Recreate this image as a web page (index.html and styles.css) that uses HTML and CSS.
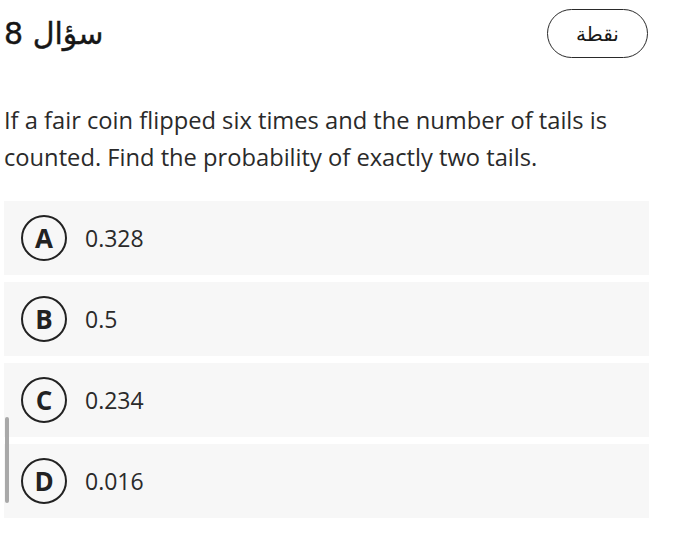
FILE: index.html
```html
<!DOCTYPE html>
<html lang="ar">
<head>
<meta charset="utf-8">
<link rel="stylesheet" href="styles.css">
</head>
<body>
<div class="page">
  <header class="head">
    <h1 class="title" dir="rtl">سؤال 8</h1>
    <button class="pill" dir="rtl">نقطة</button>
  </header>
  <p class="question" lang="en" dir="ltr">If a fair coin flipped six times and the number of tails is counted. Find the probability of exactly two tails.</p>
  <ul class="options" lang="en" dir="ltr">
    <li class="option"><span class="letter">A</span><span class="value">0.328</span></li>
    <li class="option"><span class="letter">B</span><span class="value">0.5</span></li>
    <li class="option"><span class="letter">C</span><span class="value">0.234</span></li>
    <li class="option"><span class="letter">D</span><span class="value">0.016</span></li>
  </ul>
  <div class="scrollbar"></div>
</div>
</body>
</html>
```
FILE: styles.css
```css
html, body {
  margin: 0;
  padding: 0;
  background: #ffffff;
}
body {
  font-family: "Open Sans", "DejaVu Sans", sans-serif;
  color: #222222;
}
.page {
  position: relative;
  width: 645px;
  padding: 9px 0 0 4px;
}
.head {
  display: flex;
  justify-content: space-between;
  align-items: center;
  height: 49px;
}
.title {
  margin: 0;
  font-family: "DejaVu Sans", sans-serif;
  font-weight: normal;
  font-size: 30px;
  color: #161616;
  -webkit-text-stroke: 0.4px #161616;
}
.pill {
  width: 101px;
  height: 49px;
  margin-right: 1px;
  border: 1.5px solid #2a2a2a;
  border-radius: 25px;
  background: #ffffff;
  font-family: "DejaVu Sans", sans-serif;
  font-size: 20px;
  color: #1a1a1a;
  padding: 0;
}
.question {
  margin: 44px 0 0 0;
  font-size: 23.7px;
  line-height: 37px;
  color: #2a2a2a;
}
.options {
  list-style: none;
  margin: 25px 0 0 0;
  padding: 0;
  display: flex;
  flex-direction: column;
  gap: 7px;
}
.option {
  display: flex;
  align-items: center;
  height: 74px;
  background: #f7f7f7;
  padding-left: 17px;
  gap: 18px;
}
.letter {
  box-sizing: border-box;
  width: 46px;
  height: 46px;
  border: 2.5px solid #222222;
  border-radius: 50%;
  display: flex;
  align-items: center;
  justify-content: center;
  font-weight: bold;
  font-size: 26px;
  color: #222222;
}
.value {
  font-size: 23px;
  color: #2a2a2a;
}
.scrollbar {
  position: absolute;
  left: 5px;
  top: 417px;
  width: 4px;
  height: 86px;
  border-radius: 2px;
  background: #a9a9a9;
}
```
